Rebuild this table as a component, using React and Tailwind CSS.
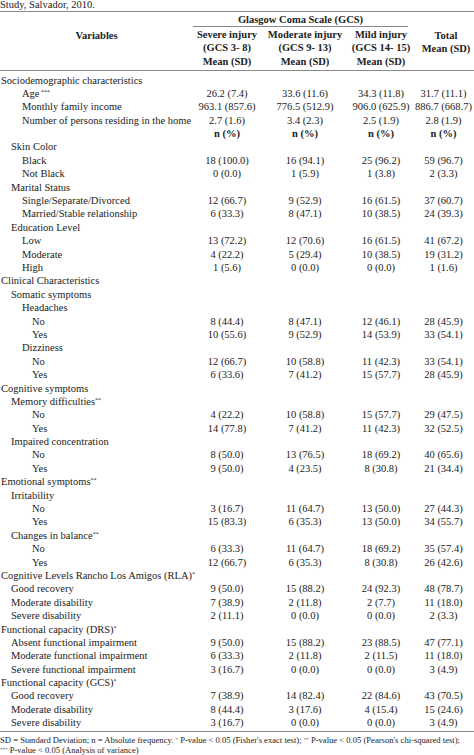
import React from 'react'

const pad = {
  0: 'pl-[1px]',
  1: 'pl-[11px]',
  2: 'pl-[22px]',
  3: 'pl-[32px]',
}

// [indent, label, superscript, values, bold]
const rows = [
  [0, 'Sociodemographic characteristics'],
  [2, 'Age', ' ***', ['26.2 (7.4)', '33.6 (11.6)', '34.3 (11.8)', '31.7 (11.1)']],
  [2, 'Monthly family income', '', ['963.1 (857.6)', '776.5 (512.9)', '906.0 (625.9)', '886.7 (668.7)']],
  [2, 'Number of persons residing in the home', '', ['2.7 (1.6)', '3.4 (2.3)', '2.5 (1.9)', '2.8 (1.9)']],
  [2, '', '', ['n (%)', 'n (%)', 'n (%)', 'n (%)'], true],
  [1, 'Skin Color'],
  [2, 'Black', '', ['18 (100.0)', '16 (94.1)', '25 (96.2)', '59 (96.7)']],
  [2, 'Not Black', '', ['0 (0.0)', '1 (5.9)', '1 (3.8)', '2 (3.3)']],
  [1, 'Marital Status'],
  [2, 'Single/Separate/Divorced', '', ['12 (66.7)', '9 (52.9)', '16 (61.5)', '37 (60.7)']],
  [2, 'Married/Stable relationship', '', ['6 (33.3)', '8 (47.1)', '10 (38.5)', '24 (39.3)']],
  [1, 'Education Level'],
  [2, 'Low', '', ['13 (72.2)', '12 (70.6)', '16 (61.5)', '41 (67.2)']],
  [2, 'Moderate', '', ['4 (22.2)', '5 (29.4)', '10 (38.5)', '19 (31.2)']],
  [2, 'High', '', ['1 (5.6)', '0 (0.0)', '0 (0.0)', '1 (1.6)']],
  [0, 'Clinical Characteristics'],
  [1, 'Somatic symptoms'],
  [2, 'Headaches'],
  [3, 'No', '', ['8 (44.4)', '8 (47.1)', '12 (46.1)', '28 (45.9)']],
  [3, 'Yes', '', ['10 (55.6)', '9 (52.9)', '14 (53.9)', '33 (54.1)']],
  [2, 'Dizziness'],
  [3, 'No', '', ['12 (66.7)', '10 (58.8)', '11 (42.3)', '33 (54.1)']],
  [3, 'Yes', '', ['6 (33.6)', '7 (41.2)', '15 (57.7)', '28 (45.9)']],
  [0, 'Cognitive symptoms'],
  [1, 'Memory difficulties', '**'],
  [3, 'No', '', ['4 (22.2)', '10 (58.8)', '15 (57.7)', '29 (47.5)']],
  [3, 'Yes', '', ['14 (77.8)', '7 (41.2)', '11 (42.3)', '32 (52.5)']],
  [1, 'Impaired concentration'],
  [3, 'No', '', ['8 (50.0)', '13 (76.5)', '18 (69.2)', '40 (65.6)']],
  [3, 'Yes', '', ['9 (50.0)', '4 (23.5)', '8 (30.8)', '21 (34.4)']],
  [0, 'Emotional symptoms', '**'],
  [1, 'Irritability'],
  [3, 'No', '', ['3 (16.7)', '11 (64.7)', '13 (50.0)', '27 (44.3)']],
  [3, 'Yes', '', ['15 (83.3)', '6 (35.3)', '13 (50.0)', '34 (55.7)']],
  [1, 'Changes in balance', '**'],
  [3, 'No', '', ['6 (33.3)', '11 (64.7)', '18 (69.2)', '35 (57.4)']],
  [3, 'Yes', '', ['12 (66.7)', '6 (35.3)', '8 (30.8)', '26 (42.6)']],
  [0, 'Cognitive Levels Rancho Los Amigos (RLA)', '*'],
  [1, 'Good recovery', '', ['9 (50.0)', '15 (88.2)', '24 (92.3)', '48 (78.7)']],
  [1, 'Moderate disability', '', ['7 (38.9)', '2 (11.8)', '2 (7.7)', '11 (18.0)']],
  [1, 'Severe disability', '', ['2 (11.1)', '0 (0.0)', '0 (0.0)', '2 (3.3)']],
  [0, 'Functional capacity (DRS)', '*'],
  [1, 'Absent functional impairment', '', ['9 (50.0)', '15 (88.2)', '23 (88.5)', '47 (77.1)']],
  [1, 'Moderate functional impairment', '', ['6 (33.3)', '2 (11.8)', '2 (11.5)', '11 (18.0)']],
  [1, 'Severe functional impairment', '', ['3 (16.7)', '0 (0.0)', '0 (0.0)', '3 (4.9)']],
  [0, 'Functional capacity (GCS)', '*'],
  [1, 'Good recovery', '', ['7 (38.9)', '14 (82.4)', '22 (84.6)', '43 (70.5)']],
  [1, 'Moderate disability', '', ['8 (44.4)', '3 (17.6)', '4 (15.4)', '15 (24.6)']],
  [1, 'Severe disability', '', ['3 (16.7)', '0 (0.0)', '0 (0.0)', '3 (4.9)']],
]

const colW = ['w-[68px]', 'w-[88px]', 'w-[64px]', 'w-[61px]']

function Row({ indent, label, sup, values, bold }) {
  return (
    <div className="flex h-[13.4px] items-center leading-[13.4px] whitespace-nowrap">
      <div className={`w-[193px] ${pad[indent]}`}>
        {label}
        {sup ? <sup className="text-[6px] leading-none">{sup}</sup> : null}
      </div>
      {values
        ? values.map((v, i) => (
            <div key={i} className={`${colW[i]} text-center ${bold ? 'font-bold' : ''}`}>
              {v}
            </div>
          ))
        : null}
    </div>
  )
}

export default function App() {
  return (
    <div
      className="w-[474px] h-[755px] overflow-hidden bg-white text-[#222] text-[10.5px]"
      style={{ fontFamily: '"Liberation Serif", serif' }}
    >
      <div className="h-[11px] overflow-hidden">
        <div className="-mt-[2px] leading-[13px]">Study, Salvador, 2010.</div>
      </div>

      <div className="border-t border-b border-[#8a8a8a] font-bold pb-[2px]">
        <div className="flex">
          <div className="w-[193px] pt-[17px] leading-[13.4px] text-center">Variables</div>
          <div className="flex flex-col">
            <div className="w-[215px] h-[15px] leading-[15px] text-center border-b border-[#8a8a8a] mb-[1px]">
              Glasgow Coma Scale (GCS)
            </div>
            <div className="flex leading-[13.4px] text-center">
              <div className="w-[68px]">
                <div>Severe injury</div>
                <div>(GCS 3- 8)</div>
                <div>Mean (SD)</div>
              </div>
              <div className="w-[88px]">
                <div>Moderate injury</div>
                <div>(GCS 9- 13)</div>
                <div>Mean (SD)</div>
              </div>
              <div className="w-[64px]">
                <div>Mild injury</div>
                <div>(GCS 14- 15)</div>
                <div>Mean (SD)</div>
              </div>
            </div>
          </div>
          <div className="w-[56px] ml-[5px] pt-[17px] leading-[13.4px] text-center">
            <div>Total</div>
            <div>Mean (SD)</div>
          </div>
        </div>
      </div>

      <div className="pt-[2.3px] pb-[1.5px] border-b border-[#8a8a8a]">
        {rows.map(([indent, label, sup, values, bold], i) => (
          <Row key={i} indent={indent} label={label} sup={sup} values={values} bold={bold} />
        ))}
      </div>

      <div className="pt-[3px] text-[8.6px] leading-[10px] whitespace-nowrap">
        <div>
          SD = Standard Deviation; n = Absolute frequency. <sup className="text-[5px]">*</sup> P-value &lt; 0.05 (Fisher&apos;s
          exact test); <sup className="text-[5px]">**</sup> P-value &lt; 0.05 (Pearson&apos;s chi-squared test);
        </div>
        <div>
          <sup className="text-[5px]">***</sup> P-value &lt; 0.05 (Analysis of variance)
        </div>
      </div>
    </div>
  )
}
